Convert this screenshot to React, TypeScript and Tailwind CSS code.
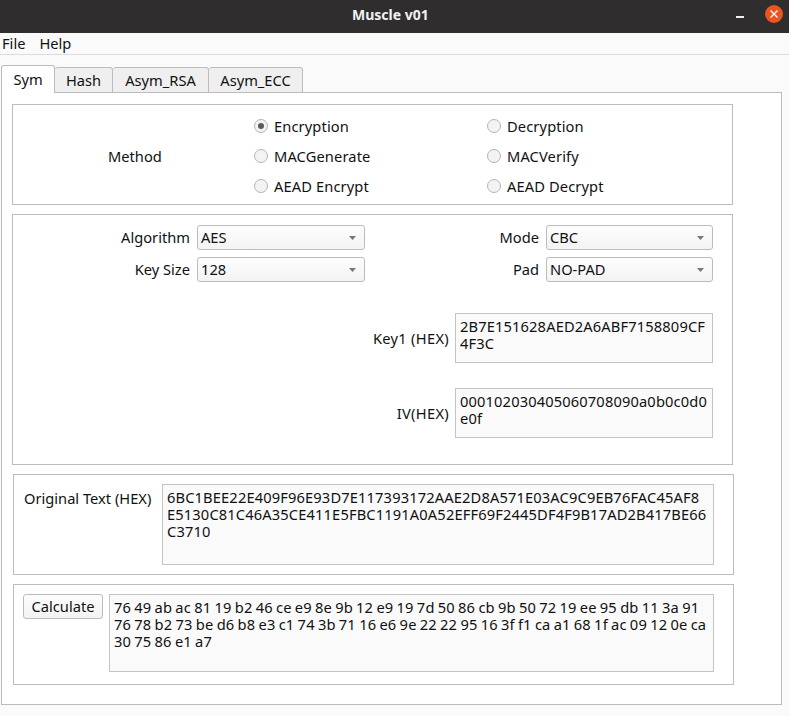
const font = "font-['Noto_Sans',sans-serif]";

function Radio({ label, checked }: { label: string; checked?: boolean }) {
  return (
    <div className="flex h-[30px] items-center gap-[6px]">
      <span className="flex h-[14px] w-[14px] items-center justify-center rounded-full border border-[#b4b4b4] bg-[#f3f3f3]">
        {checked && <span className="h-[6px] w-[6px] rounded-full bg-[#5a5a5a]" />}
      </span>
      <span className="tracking-[0.12px]">{label}</span>
    </div>
  );
}

function Select({ value, width }: { value: string; width: string }) {
  return (
    <div className={`flex h-[25px] items-center justify-between rounded-[3px] border border-[#bcbcbc] bg-gradient-to-b from-[#fdfdfd] to-[#f3f3f3] pl-[3px] pr-[8px] ${width}`}>
      <span className="pb-[2px]">{value}</span>
      <svg width="7" height="4" viewBox="0 0 7 4">
        <path d="M0 0h7L3.5 4z" fill="#777777" />
      </svg>
    </div>
  );
}

function TextBox({ text, className }: { text: string; className: string }) {
  return (
    <div className={`whitespace-pre border border-[#c4c4c4] bg-[#fafafa] px-[4px] pt-[4px] leading-[17px] tracking-[0.14px] ${className}`}>
      {text}
    </div>
  );
}

const tabs = ["Hash", "Asym_RSA", "Asym_ECC"];
const tabWidths = ["w-[58px]", "w-[96px]", "w-[94px]"];

export default function App() {
  return (
    <div className={`${font} h-[716px] w-[789px] overflow-hidden bg-[#fafafa] text-[14.67px] text-[#111111]`}>
      {/* title bar */}
      <div className="flex h-[33px] items-center justify-between bg-[#2f2d2d] pl-[352px] pr-[6px]">
        <span className="pb-[4px] text-[14px] font-bold text-[#f2f2f2]">Muscle v01</span>
        <div className="flex items-center gap-[21px] pb-[5px]">
          <span className="mt-[5px] h-[2px] w-[8px] bg-[#f0f0f0]" />
          <span className="flex h-[18px] w-[18px] items-center justify-center rounded-full bg-[#e95420]">
            <svg width="8" height="8" viewBox="0 0 8 8">
              <path d="M0.5 0.5l7 7M7.5 0.5l-7 7" stroke="#ffffff" strokeWidth="1.3" />
            </svg>
          </span>
        </div>
      </div>

      {/* menu bar */}
      <div className="flex h-[22px] items-center gap-[14px] border-b border-[#dcdcdc] pb-[2px] pl-[2px]">
        <span>File</span>
        <span>Help</span>
      </div>

      {/* tabs */}
      <div className="ml-[1px] mt-[10px] flex h-[28px] items-end">
        <div className="relative z-10 flex h-[28px] w-[54px] items-center justify-center rounded-t-[3px] border border-b-0 border-[#bcbcbc] bg-white pb-[2px]">
          Sym
        </div>
        {tabs.map((tab, i) => (
          <div
            key={tab}
            className={`flex h-[26px] items-center justify-center rounded-t-[3px] border border-l-0 border-[#bcbcbc] bg-[#efefef] ${tabWidths[i]}`}
          >
            {tab}
          </div>
        ))}
      </div>

      {/* tab panel */}
      <div className="-mt-px ml-[1px] flex h-[613px] w-[781px] flex-col gap-[9px] border border-[#bcbcbc] bg-white pl-[10px] pt-[11px]">
        <section className="flex h-[101px] w-[721px] border border-[#bcbcbc]">
          <div className="flex w-[241px] items-center pl-[95px] pt-[2px]">Method</div>
          <div className="flex w-[233px] flex-col justify-center pt-[2px]">
            <Radio label="Encryption" checked />
            <Radio label="MACGenerate" />
            <Radio label="AEAD Encrypt" />
          </div>
          <div className="flex flex-col justify-center pt-[2px]">
            <Radio label="Decryption" />
            <Radio label="MACVerify" />
            <Radio label="AEAD Decrypt" />
          </div>
        </section>

        <section className="flex h-[251px] w-[721px] flex-col border border-[#bcbcbc] pt-[10px]">
          <div className="grid grid-cols-[184px_168px_181px_167px] items-center gap-y-[7px]">
            <span className="pb-[2px] pr-[7px] text-right">Algorithm</span>
            <Select value="AES" width="w-[168px]" />
            <span className="pb-[2px] pr-[7px] text-right">Mode</span>
            <Select value="CBC" width="w-[167px]" />
            <span className="pb-[2px] pr-[7px] text-right">Key Size</span>
            <Select value="128" width="w-[168px]" />
            <span className="pb-[2px] pr-[7px] text-right">Pad</span>
            <Select value="NO-PAD" width="w-[167px]" />
          </div>
          <div className="mt-[31px] flex flex-col gap-[25px] pl-[351px]">
            <div className="flex items-center gap-[6px]">
              <span className="w-[85px] text-right tracking-[0.3px]">Key1 (HEX)</span>
              <TextBox text={"2B7E151628AED2A6ABF7158809CF\n4F3C"} className="h-[50px] w-[258px]" />
            </div>
            <div className="flex items-center gap-[6px]">
              <span className="w-[85px] text-right tracking-[0.3px]">IV(HEX)</span>
              <TextBox text={"000102030405060708090a0b0c0d0\ne0f"} className="h-[50px] w-[258px]" />
            </div>
          </div>
        </section>

        <section className="ml-px flex h-[101px] w-[721px] gap-[10px] border border-[#bcbcbc] pl-[10px] pt-[9px]">
          <span className="w-[128px] whitespace-nowrap pt-[3px]">Original Text (HEX)</span>
          <TextBox
            text={"6BC1BEE22E409F96E93D7E117393172AAE2D8A571E03AC9C9EB76FAC45AF8\nE5130C81C46A35CE411E5FBC1191A0A52EFF69F2445DF4F9B17AD2B417BE66\nC3710"}
            className="h-[81px] w-[552px]"
          />
        </section>

        <section className="ml-px flex h-[101px] w-[721px] items-start gap-[6px] border border-[#bcbcbc] pl-[9px] pt-[9px]">
          <button className="h-[25px] w-[80px] rounded-[3px] border border-[#bcbcbc] bg-gradient-to-b from-[#fdfdfd] to-[#f3f3f3] pb-[2px]">
            Calculate
          </button>
          <TextBox
            text={"76 49 ab ac 81 19 b2 46 ce e9 8e 9b 12 e9 19 7d 50 86 cb 9b 50 72 19 ee 95 db 11 3a 91\n76 78 b2 73 be d6 b8 e3 c1 74 3b 71 16 e6 9e 22 22 95 16 3f f1 ca a1 68 1f ac 09 12 0e ca\n30 75 86 e1 a7"}
            className="h-[78px] w-[605px] [word-spacing:-0.7px]"
          />
        </section>
      </div>
    </div>
  );
}
